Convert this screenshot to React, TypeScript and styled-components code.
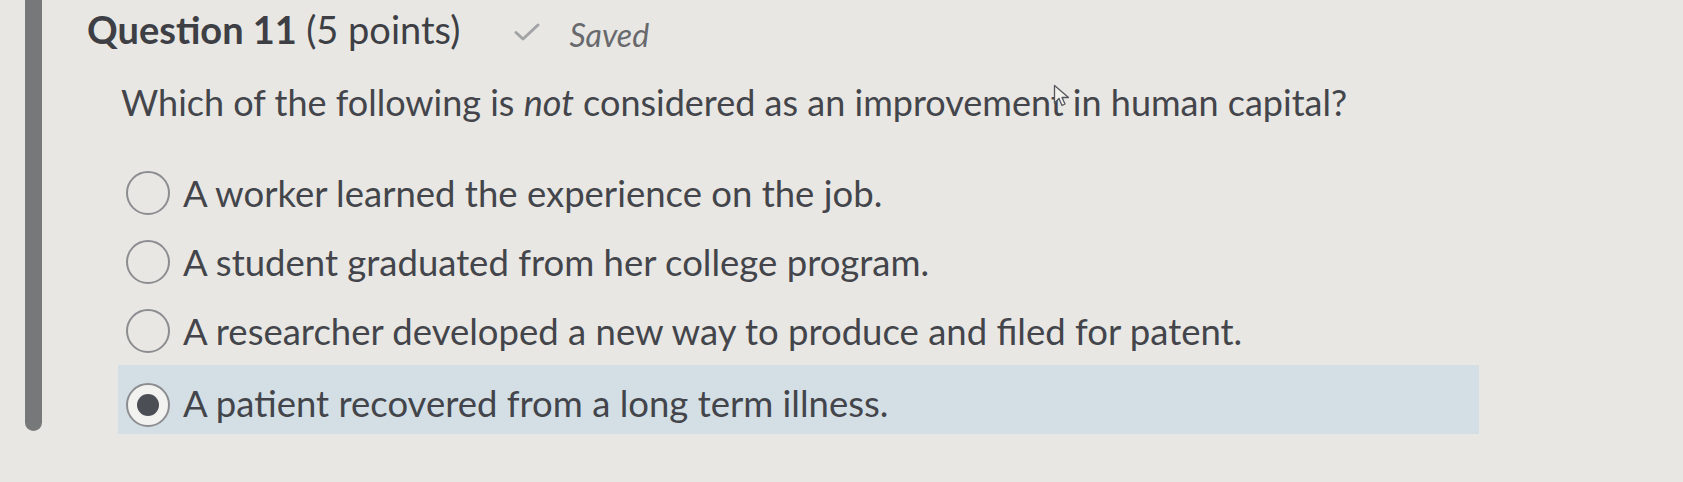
import React from 'react'
import styled, { createGlobalStyle } from 'styled-components'

const GlobalStyle = createGlobalStyle`
    html, body {
        margin: 0;
        padding: 0;
        background: #e8e7e3;
        font-family: 'Lato', 'Noto Sans', sans-serif;
        color: #43454b;
    }
`

const Page = styled.div`
    position: relative;
    display: flex;
    width: 1683px;
    height: 482px;
    overflow: hidden;
`

const LeftRule = styled.div`
    flex: none;
    width: 17px;
    height: 431px;
    margin-left: 25px;
    background: #77787a;
    border-radius: 0 0 9px 9px;
`

const Content = styled.div`
    flex: 1;
    padding-left: 45px;
`

const Header = styled.div`
    display: flex;
    align-items: baseline;
    height: 46px;
    line-height: 58px;
`

const Title = styled.h2`
    margin: 0;
    font-size: 38px;
    font-weight: 700;
    color: #3d3f45;
    span {
        font-weight: 400;
    }
`

const SavedTag = styled.div`
    display: flex;
    align-items: center;
    gap: 29px;
    margin-left: 54px;
    font-size: 32px;
    font-style: italic;
    color: #68696d;
    svg {
        position: relative;
        top: -3px;
    }
`

const Prompt = styled.p`
    margin: 0;
    padding-left: 34px;
    height: 112px;
    font-size: 36px;
    line-height: 112px;
    color: #43454b;
    em {
        font-style: italic;
    }
`

const Options = styled.div`
    display: flex;
    flex-direction: column;
    width: 1361px;
    margin-left: 31px;
`

const Option = styled.label<{ $selected?: boolean }>`
    display: flex;
    align-items: center;
    gap: 13px;
    height: 69px;
    padding-left: 8px;
    font-size: 36.5px;
    color: #43454b;
    background: ${p => (p.$selected ? '#d3dfe5' : 'transparent')};
`

const Radio = styled.span<{ $checked?: boolean }>`
    flex: none;
    display: flex;
    align-items: center;
    justify-content: center;
    width: 44px;
    height: 44px;
    box-sizing: border-box;
    border-radius: 50%;
    border: 2.5px solid #8c8d90;
    background: ${p => (p.$checked ? '#f2f2f0' : 'transparent')};
    margin-top: ${p => (p.$checked ? '10px' : '0')};
    &::after {
        content: '';
        display: ${p => (p.$checked ? 'block' : 'none')};
        width: 22px;
        height: 22px;
        border-radius: 50%;
        background: #4b4f55;
    }
`

const OptionText = styled.span<{ $checked?: boolean }>`
    margin-top: ${p => (p.$checked ? '6px' : '0')};
`

const Cursor = styled.svg`
    position: absolute;
    left: 1053px;
    top: 84px;
`

const options = [
    'A worker learned the experience on the job.',
    'A student graduated from her college program.',
    'A researcher developed a new way to produce and filed for patent.',
    'A patient recovered from a long term illness.',
]

export default function App() {
    const selected = 3
    return (
        <>
            <GlobalStyle />
            <Page>
                <LeftRule />
                <Content>
                    <Header>
                        <Title>
                            Question 11 <span>(5 points)</span>
                        </Title>
                        <SavedTag>
                            <svg width="26" height="18" viewBox="0 0 26 18">
                                <path
                                    d="M2 9.5 L9 16 L24 2"
                                    fill="none"
                                    stroke="#a3a4a6"
                                    strokeWidth="3"
                                    strokeLinecap="round"
                                    strokeLinejoin="round"
                                />
                            </svg>
                            Saved
                        </SavedTag>
                    </Header>
                    <Prompt>
                        Which of the following is <em>not</em> considered as an
                        improvement in human capital?
                    </Prompt>
                    <Options>
                        {options.map((o, i) => (
                            <Option key={i} $selected={i === selected}>
                                <Radio $checked={i === selected} />
                                <OptionText $checked={i === selected}>{o}</OptionText>
                            </Option>
                        ))}
                    </Options>
                </Content>
                <Cursor width="20" height="24" viewBox="0 0 20 24">
                    <path
                        d="M1.5 1.5 L1.5 19 L6 14.5 L9 21.5 L12 20 L9 13.5 L15.5 13.5 Z"
                        fill="#f2f2ef"
                        stroke="#55575c"
                        strokeWidth="1.3"
                        strokeLinejoin="round"
                    />
                </Cursor>
            </Page>
        </>
    )
}
